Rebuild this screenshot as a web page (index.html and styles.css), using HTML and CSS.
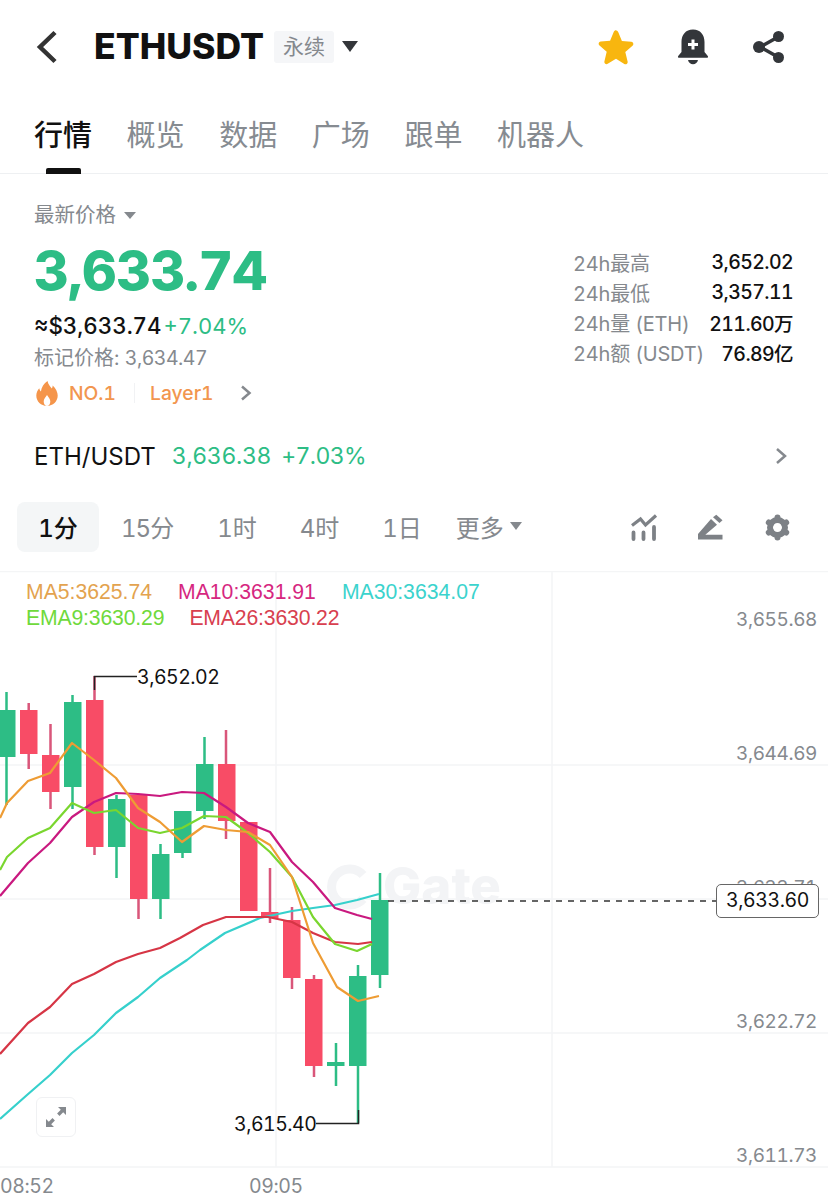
FILE: index.html
```html
<!doctype html>
<html>
<head>
<meta charset="UTF-8">
<title>ETHUSDT 永续</title>
<link rel="stylesheet" href="styles.css">
</head>

<body>
<div class="page">
	<header class="topbar">
		<svg class="back" width="22" height="34" viewBox="0 0 22 34"><path d="M19 2.5 4 17l15 14.500" fill="none" stroke="#333" stroke-width="4.500"/></svg>
		<h1 class="symbol">ETHUSDT</h1>
		<span class="perp">永续</span>
		<i class="tri tri-dark"></i>
		<div class="topbar-icons">
			<svg width="36" height="36" viewBox="0 0 36 36"><path d="M18 1.500c1 0 1.800.6 2.300 1.700l3.600 8.800 9.300.8c2.100.2 2.900 2.600 1.300 4l-7.200 6.200 2.300 9.600c.5 2-1.600 3.500-3.300 2.400L18 29.800l-8.300 5c-1.700 1.100-3.800-.4-3.300-2.400l2.300-9.600-7.200-6.200c-1.600-1.400-.8-3.800 1.300-4l9.300-.8 3.600-8.800c.5-1.100 1.300-1.700 2.300-1.700z" fill="#f8b60f"/></svg>
			<svg width="32" height="36" viewBox="0 0 32 36"><path d="M16 .5c7.500 0 11.500 5.500 11.500 12.500v10l3.300 4c.6.900.1 1.800-1 1.800H2.200c-1.100 0-1.600-.9-1-1.800l3.300-4V13C4.500 6 8.500.5 16 .5z" fill="#33363a"/><path d="M11 31h10c-.5 2.700-2.500 4.200-5 4.200S11.500 33.700 11 31z" fill="#33363a"/><path d="M16 10.500v10M11 15.500h10" stroke="#fff" stroke-width="3"/></svg>
			<svg width="34" height="34" viewBox="0 0 34 34"><path d="M26 7 8 17l18 10" fill="none" stroke="#33363a" stroke-width="3.500"/><circle cx="26.500" cy="6.500" r="5.500" fill="#33363a"/><circle cx="7" cy="17" r="6" fill="#33363a"/><circle cx="26.500" cy="27.500" r="5.500" fill="#33363a"/></svg>
		</div>
	</header>

	<nav class="tabs">
		<a class="tab on">行情</a>
		<a class="tab">概览</a>
		<a class="tab">数据</a>
		<a class="tab">广场</a>
		<a class="tab">跟单</a>
		<a class="tab">机器人</a>
	</nav>

	<section class="market">
		<div class="quote">
			<div class="last-label">最新价格<i class="tri tri-gray"></i></div>
			<div class="last-price">3,633.74</div>
			<div class="usd-line">≈$3,633.74<span class="up">+7.04%</span></div>
			<div class="mark-line">标记价格: <span class="mark-num">3,634.47</span></div>
			<div class="rank-line">
				<svg width="22" height="25" viewBox="0 0 22 25"><path d="M11.500 0c.8 3.800 2.600 5.400 4.400 7.400.5-1 .8-2 .8-3 3 2.700 5 6.400 5 10.200C21.700 20.500 17 25 11 25S.3 20.500.3 14.600c0-3 1.300-5.300 3-7.300.2 1.400.7 2.400 1.600 3.100C5.300 6.300 8 2.500 11.500 0z" fill="#f5954a"/><path d="M11 14c-1.600 2.300-3.300 4.200-3.300 6.500 0 2.400 1.500 4.500 3.300 4.500s3.300-2.100 3.300-4.500c0-2.300-1.700-4.200-3.300-6.500z" fill="#fff"/></svg>
				<span class="rank">NO.1</span>
				<i class="rank-sep"></i>
				<span class="rank">Layer1</span>
				<svg class="rank-arrow" width="12" height="16" viewBox="0 0 12 16"><path d="m2 1.500 7.500 6.500L2 14.500" fill="none" stroke="#85898e" stroke-width="2.500"/></svg>
			</div>
		</div>
		<dl class="stats">
			<div class="stat"><dt>24h最高</dt><dd>3,652.02</dd></div>
			<div class="stat"><dt>24h最低</dt><dd>3,357.11</dd></div>
			<div class="stat"><dt>24h量 (ETH)</dt><dd>211.60万</dd></div>
			<div class="stat"><dt>24h额 (USDT)</dt><dd>76.89亿</dd></div>
		</dl>
	</section>

	<div class="spot">
		<span class="spot-name">ETH/USDT</span>
		<span class="up spot-price">3,636.38</span>
		<span class="up spot-change">+7.03%</span>
		<svg class="spot-arrow" width="13" height="18" viewBox="0 0 13 18"><path d="m2 2 8 7-8 7" fill="none" stroke="#85898e" stroke-width="2.500"/></svg>
	</div>

	<div class="periods">
		<a class="period on">1分</a>
		<a class="period p15">15分</a>
		<a class="period p1h">1时</a>
		<a class="period p4h">4时</a>
		<a class="period p1d">1日</a>
		<a class="period more">更多<i class="tri tri-small"></i></a>
		<div class="tools">
			<svg width="28" height="27" viewBox="0 0 28 27"><path d="M2 11.500 10.500 5l5 6L26 1.500" fill="none" stroke="#7d8186" stroke-width="3.200"/><path d="M3.500 18.500V25M13.500 18.500V25M24 13V25" stroke="#7d8186" stroke-width="3.800" stroke-linecap="round" fill="none"/></svg>
			<svg width="28" height="27" viewBox="0 0 28 27"><path d="M1 20 14 5l6 5.700-11.700 10H25.500V25.500H1z" fill="#7d8186"/><path d="M16 3.300 19.300.7 25.500 6.300 22.500 9z" fill="#7d8186"/></svg>
			<svg width="27" height="27" viewBox="0 0 27 27"><circle cx="13.500" cy="13.500" r="7.500" fill="none" stroke="#7d8186" stroke-width="6"/><path d="M13.500 3.500v2.500M13.500 23.500V21M22.200 8.500 20 9.800M4.800 8.500 7 9.800M22.200 18.500 20 17.200M4.800 18.500 7 17.200" stroke="#7d8186" stroke-width="6" stroke-linecap="round"/></svg>
		</div>
	</div>

	<div class="chart">
		<div class="legend">
			<div class="legend-row">
				<span class="ma5">MA5:3625.74</span>
				<span class="ma10">MA10:3631.91</span>
				<span class="ma30">MA30:3634.07</span>
			</div>
			<div class="legend-row row-ema">
				<span class="ema9">EMA9:3630.29</span>
				<span class="ema26">EMA26:3630.22</span>
			</div>
		</div>
		<!-- viewBox y starts at 571 so numbers read as page coordinates -->
		<svg class="plot" width="828" height="633" viewBox="0 571 828 633">
			<g class="grid">
				<path d="M0 571.500H828M0 765H828M0 899H828M0 1033H828M0 1167H828"/>
				<path d="M276 571V1167M552 571V1167"/>
			</g>

			<g class="watermark">
				<path d="M363 875a18 18 0 1 0 0 24" fill="none" stroke="#f3f4f6" stroke-width="9"/>
				<text x="383" y="904">Gate</text>
			</g>

			<g class="axis">
				<text x="817" y="626">3,655.68</text>
				<text x="817" y="760">3,644.69</text>
				<text x="817" y="894">3,633.71</text>
				<text x="817" y="1028">3,622.72</text>
				<text x="817" y="1162">3,611.73</text>
			</g>
			<text class="time" x="0" y="1193">08:52</text>
			<text class="time" x="249" y="1193">09:05</text>

			<g class="green">
				<path class="wick" d="M6.500 692V805M72.500 695V809M116.500 795V878M160.500 844V919M182.500 811V858M204.500 737V819M336 1043V1086M358 965V1123M380 873V988"/>
				<rect x="-2" y="710" width="17.500" height="47"/>
				<rect x="64" y="702" width="17.500" height="85"/>
				<rect x="108" y="799" width="17.500" height="48"/>
				<rect x="152" y="854" width="17.500" height="45"/>
				<rect x="174" y="811" width="17.500" height="42"/>
				<rect x="196" y="764" width="17.500" height="47"/>
				<rect x="327" y="1062" width="17.500" height="4"/>
				<rect x="349" y="976" width="17.500" height="90"/>
				<rect x="371" y="900" width="17.500" height="75"/>
			</g>
			<g class="red">
				<path class="wick" d="M28.700 703V769M50.500 724V809M94.500 676V855M138.500 795V919M226 730V839M270 868V923M292 907V989M314 975V1077"/>
				<rect x="20" y="710" width="17.500" height="44"/>
				<rect x="42" y="755" width="17.500" height="37"/>
				<rect x="86" y="700" width="17.500" height="147"/>
				<rect x="130" y="795" width="17.500" height="104"/>
				<rect x="218" y="764" width="17.500" height="57"/>
				<rect x="240" y="822" width="17.500" height="89"/>
				<rect x="261" y="912" width="17.500" height="6"/>
				<rect x="283" y="920" width="17.500" height="58"/>
				<rect x="305" y="979" width="17.500" height="87"/>
			</g>

			<polyline class="line l-ma30" points="0,1119 27,1095 50,1075 72,1053 94,1035 116,1013 138,997 160,978 187,960 200,950 225,933 260,918 292,911 313,908 335,905 357,900 379,894"/>
			<polyline class="line l-ema26" points="0,1054 28,1023 50,1007 72,984 94,974 116,962 138,954 160,948 180,938 203,925 226,917 268,917 292,922 313,933 335,942 358,944 372,942"/>
			<polyline class="line l-ma10" points="0,896 28,863 50,843 72,817 94,802 116,793 138,794 160,796 182,792 204,793 226,807 248,823 270,832 292,862 313,882 335,908 357,915 372,919"/>
			<polyline class="line l-ema9" points="0,870 7,857 28,838 50,828 72,803 94,813 116,810 138,828 160,833 182,828 204,816 226,817 248,833 270,852 292,877 313,917 335,944 357,951 372,944"/>
			<polyline class="line l-ma5" points="0,818 7,803 28,781 50,773 72,743 94,760 116,778 138,808 160,822 182,842 204,826 226,830 248,832 270,845 292,877 313,943 337,987 358,1001 379,996"/>

			<path class="leader" d="M94.500 690V676.500H137M316 1123.500H358.500V1110"/>
			<text class="extreme" x="137" y="684">3,652.02</text>
			<text class="extreme" x="234" y="1131">3,615.40</text>

			<path class="price-line" d="M388 901H716"/>
		</svg>
		<div class="price-tag">3,633.60</div>
		<a class="expand">
			<svg width="22" height="22" viewBox="0 0 22 22"><path d="M13 1h8v8l-2.800-2.800-3.700 3.700-2.400-2.400 3.700-3.700zM9 21H1v-8l2.800 2.800 3.700-3.700 2.400 2.400-3.700 3.700z" fill="#85898e"/></svg>
		</a>
	</div>
</div>
</body>
</html>
```

FILE: styles.css
```css
*{ margin:0; padding:0; box-sizing:border-box; }
body{ background:#fff; color:#111; font-family:"Inter","Liberation Sans","Noto Sans CJK SC",sans-serif; font-variant-numeric:tabular-nums; }
.page{ width:828px; height:1204px; overflow:hidden; }
i{ display:block; font-style:normal; }

.tri{ width:0; height:0; border-style:solid; border-color:transparent; border-bottom-width:0; }
.tri-dark{ border-width:11px 8px 0; border-top-color:#33363a; margin-left:8px; }
.tri-gray{ border-width:7px 6px 0; border-top-color:#85898e; margin-left:8px; }
.tri-small{ border-width:8px 6px 0; border-top-color:#85898e; margin-left:6px; }

.topbar{ height:93px; display:flex; align-items:center; padding-left:36px; }
.back{ margin-right:36px; }
.symbol{ font-size:35.500px; font-weight:800; line-height:1; color:#111; }
.perp{ margin-left:10px; width:60px; height:32px; line-height:32px; text-align:center; background:#f5f6f8; border-radius:3px; font-size:21px; color:#85898e; }
.topbar-icons{ margin-left:auto; margin-right:42px; display:flex; align-items:center; gap:43px; }

.tabs{ height:81px; display:flex; gap:34.600px; padding:27px 0 0 34px; border-bottom:1px solid #eef0f2; }
.tab{ font-size:29px; line-height:32px; color:#868b91; height:54px; position:relative; }
.tab.on{ color:#111; font-weight:500; }
.tab.on:after{ content:""; position:absolute; left:12px; bottom:0; width:35px; height:6px; background:#111; border-radius:2px 2px 0 0; }

.market{ height:247px; display:flex; justify-content:space-between; padding:26px 35px 0 34px; }
.last-label{ display:flex; align-items:center; font-size:20.500px; line-height:30px; color:#85898e; }
.last-price{ font-size:53.700px; font-weight:800; line-height:60px; margin-top:11px; margin-bottom:-1px; color:#2dbd85; letter-spacing:-.5px; }
.usd-line{ font-size:22.300px; line-height:30px; margin-top:11px; color:#111; font-weight:500; }
.up{ color:#2dbd85; }
.usd-line .up{ margin-left:2px; font-size:22px; font-weight:400; }
.mark-line{ font-size:20px; line-height:28px; margin-top:3px; color:#85898e; }
.mark-num{ font-size:19.500px; letter-spacing:-.5px; }
.rank-line{ display:flex; align-items:center; height:30px; margin-top:6px; padding-left:2px; }
.rank{ font-size:19.300px; color:#f2964f; font-weight:500; }
.rank-line svg:first-child{ margin-right:11px; }
.rank-sep{ width:1px; height:20px; background:#f1f2f4; margin:0 15px 0 18px; }
.rank-arrow{ margin-left:26px; }

.stats{ padding-top:47px; width:220px; }
.stat{ display:flex; justify-content:space-between; height:30px; align-items:center; font-size:20px; white-space:nowrap; }
.stat dt{ color:#85898e; letter-spacing:-.2px; }
.stat dd{ color:#111; font-size:19.500px; font-weight:500; letter-spacing:-.6px; }

.spot{ height:52px; display:flex; align-items:center; padding:0 40px 0 34px; font-size:23px; margin-top:9px; }
.spot-name{ color:#111; font-size:24px; }
.spot-price{ margin-left:16px; letter-spacing:-.3px; }
.spot-change{ margin-left:10px; letter-spacing:-.6px; }
.spot-arrow{ margin-left:auto; }

.periods{ height:50px; margin-top:20px; display:flex; align-items:center; padding-left:17px; position:relative; }
.period{ font-size:24px; color:#85898e; display:flex; align-items:center; white-space:nowrap; padding-bottom:2px; }
.period.on{ width:82px; height:50px; justify-content:center; background:#f4f6f7; border-radius:8px; color:#111; font-weight:500; }
.p15{ margin-left:22px; letter-spacing:-1px; }
.p1h{ margin-left:44px; }
.p4h{ margin-left:43px; }
.p1d{ margin-left:43px; }
.more{ margin-left:34px; }
.tools{ margin-left:auto; margin-right:37px; display:flex; gap:39px; }

.chart{ position:relative; height:633px; margin-top:19px; }
.plot{ display:block; }
.legend{ position:absolute; left:26px; top:8px; font-family:"Liberation Sans","Noto Sans CJK SC",sans-serif; font-size:21.200px; line-height:26px; z-index:1; }
.legend-row{ display:flex; gap:26px; white-space:nowrap; }
.row-ema{ gap:25px; letter-spacing:-.15px; }
.ma5{ color:#e3a34f; }
.ma10{ color:#d6277f; }
.ma30{ color:#3bd3cd; }
.ema9{ color:#6fd93c; }
.ema26{ color:#d8404f; }

.grid path{ stroke:#f4f5f6; stroke-width:1.500; fill:none; }
.watermark text{ font-size:51px; font-weight:800; fill:#f3f4f6; }
.axis text{ font-size:19px; fill:#85898e; text-anchor:end; letter-spacing:-.4px; }
.time{ font-size:19.500px; fill:#85898e; letter-spacing:-.4px; }
.green rect{ fill:#2dbd85; }
.red rect{ fill:#f84c66; }
.green .wick{ stroke:#2dbd85; stroke-width:2.500; }
.red .wick{ stroke:#d9567a; stroke-width:2.500; }
.line{ fill:none; stroke-width:2.200; stroke-linejoin:round; }
.l-ma5{ stroke:#ee9c34; }
.l-ma10{ stroke:#c9197f; }
.l-ma30{ stroke:#36d0cc; }
.l-ema9{ stroke:#7ad62f; }
.l-ema26{ stroke:#d63545; }
.leader{ fill:none; stroke:#222; stroke-width:1.500; }
.extreme{ font-size:19.500px; fill:#111; letter-spacing:-.5px; }
.price-line{ stroke:#333; stroke-width:1.500; stroke-dasharray:6 6; }
.price-tag{ position:absolute; left:716px; top:313px; width:103px; height:34px; background:#fff; border:1.500px solid #666; border-radius:5px; text-align:center; font-size:19.500px; line-height:31px; color:#111; letter-spacing:-.4px; }
.expand{ position:absolute; left:36px; top:526px; width:40px; height:40px; display:flex; align-items:center; justify-content:center; background:#fff; border:1.500px solid #f0f1f3; border-radius:6px; }
```
